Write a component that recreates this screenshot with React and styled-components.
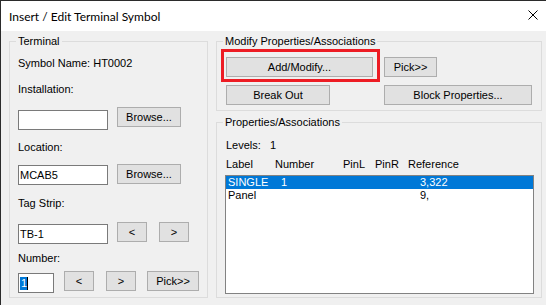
import React from 'react';
import styled, { createGlobalStyle } from 'styled-components';

const GlobalStyle = createGlobalStyle`
  html, body {
    margin: 0;
    padding: 0;
    background: #f0f0f0;
  }
  * {
    box-sizing: border-box;
  }
`;

const Window = styled.div`
  width: 546px;
  height: 305px;
  display: flex;
  flex-direction: column;
  border-left: 1px solid #2b2b2b;
  background: #f0f0f0;
  overflow: hidden;
  font-family: "Liberation Sans", Arial, sans-serif;
  font-size: 11px;
  color: #000;
`;

const TitleBar = styled.div`
  height: 31px;
  flex: none;
  display: flex;
  align-items: center;
  justify-content: space-between;
  padding: 0 8px 0 8px;
  background: #fff;
  border-top: 1px solid #2b2b2b;
`;

const Title = styled.div`
  font-family: Lato, "Noto Sans", sans-serif;
  font-size: 12px;
  color: #000;
`;

const CloseIcon = styled.svg`
  width: 10px;
  height: 10px;
  margin-top: -2px;
`;

const Body = styled.div`
  flex: 1;
  display: flex;
  gap: 8px;
  padding: 3px 0 0 8px;
`;

const Group = styled.fieldset`
  margin: 0;
  padding: 0;
  min-width: 0;
  width: ${(p) => p.$width}px;
  height: ${(p) => p.$height}px;
  border: 1px solid #dcdcdc;
  display: flex;
  flex-direction: column;
`;

const Legend = styled.legend`
  margin-left: 6px;
  padding: 0 2px;
  line-height: 14px;
  font-size: 11px;
`;

const Stack = styled.div`
  display: flex;
  flex-direction: column;
  padding-left: 8px;
`;

const Label = styled.div`
  line-height: 14px;
  margin-top: ${(p) => p.$mt || 0}px;
  white-space: nowrap;
`;

const Row = styled.div`
  display: flex;
  align-items: flex-start;
  gap: ${(p) => p.$gap || 9}px;
  margin-top: ${(p) => p.$mt || 0}px;
`;

const TextBox = styled.div`
  width: ${(p) => p.$width || 90}px;
  height: 20px;
  margin-top: ${(p) => p.$mt || 0}px;
  background: #fff;
  border: 1px solid #7a7a7a;
  padding-left: 1px;
  display: flex;
  align-items: center;
  white-space: nowrap;
`;

const Selected = styled.span`
  background: #0078d7;
  color: #fff;
  line-height: 13px;
  padding: 0 0 0 1px;
  border-right: 1px solid #000;
`;

const Button = styled.div`
  width: ${(p) => p.$width}px;
  height: 20px;
  flex: none;
  margin-left: ${(p) => p.$ml || 0}px;
  background: #e1e1e1;
  border: 1px solid #adadad;
  display: flex;
  align-items: center;
  justify-content: center;
  white-space: nowrap;
`;

const RightColumn = styled.div`
  display: flex;
  flex-direction: column;
  gap: 4px;
`;

const ButtonGrid = styled.div`
  display: grid;
  grid-template-columns: 158px auto;
  row-gap: 8px;
  justify-items: start;
  padding: 9px 0 0 9px;
`;

const Highlight = styled.div`
  position: relative;
`;

const RedBox = styled.div`
  position: absolute;
  left: -5px;
  top: -8px;
  width: 159px;
  height: 33px;
  border: 3px solid #ed1c24;
  pointer-events: none;
`;

const InfoRow = styled.div`
  display: grid;
  grid-template-columns: ${(p) => p.$cols};
  line-height: 14px;
  margin-top: ${(p) => p.$mt || 0}px;
  padding-left: 1px;
  white-space: nowrap;
`;

const ListBox = styled.div`
  width: 309px;
  height: 119px;
  margin-top: 4px;
  background: #fff;
  border: 1px solid #828282;
  display: flex;
  flex-direction: column;
`;

const ListRow = styled.div`
  display: grid;
  grid-template-columns: 53px 139px auto;
  height: 13px;
  line-height: 13px;
  padding-left: 2px;
  white-space: nowrap;
  background: ${(p) => (p.$selected ? '#0078d7' : 'transparent')};
  color: ${(p) => (p.$selected ? '#fff' : '#000')};
`;

const rows = [
  { label: 'SINGLE', number: '1', reference: '3,322', selected: true },
  { label: 'Panel', number: '', reference: '9,', selected: false },
];

const App = () => (
  <>
    <GlobalStyle />
    <Window>
      <TitleBar>
        <Title>Insert / Edit Terminal Symbol</Title>
        <CloseIcon viewBox="0 0 10 10">
          <path d="M0.5 0.5 L9.5 9.5 M9.5 0.5 L0.5 9.5" stroke="#000" strokeWidth="1" fill="none" />
        </CloseIcon>
      </TitleBar>
      <Body>
        <Group $width={199} $height={264}>
          <Legend>Terminal</Legend>
          <Stack>
            <Label $mt={8}>Symbol Name: HT0002</Label>
            <Label $mt={12}>Installation:</Label>
            <Row $mt={11}>
              <TextBox $mt={3} />
              <Button $width={64}>Browse...</Button>
            </Row>
            <Label $mt={10}>Location:</Label>
            <Row $mt={10}>
              <TextBox $mt={1}>MCAB5</TextBox>
              <Button $width={64}>Browse...</Button>
            </Row>
            <Label $mt={11}>Tag Strip:</Label>
            <Row $mt={12} $gap={9}>
              <TextBox $mt={2}>TB-1</TextBox>
              <Button $width={30}>&lt;</Button>
              <Button $width={30} $ml={3}>&gt;</Button>
            </Row>
            <Label $mt={7}>Number:</Label>
            <Row $mt={6} $gap={10}>
              <TextBox $mt={2} $width={36}>
                <Selected>1</Selected>
              </TextBox>
              <Button $width={30}>&lt;</Button>
              <Button $width={30} $ml={2}>&gt;</Button>
              <Button $width={52} $ml={1}>Pick&gt;&gt;</Button>
            </Row>
          </Stack>
        </Group>
        <RightColumn>
          <Group $width={326} $height={77}>
            <Legend>Modify Properties/Associations</Legend>
            <ButtonGrid>
              <Highlight>
                <Button $width={147}>Add/Modify...</Button>
                <RedBox />
              </Highlight>
              <Button $width={53}>Pick&gt;&gt;</Button>
              <Button $width={104}>Break Out</Button>
              <Button $width={148}>Block Properties...</Button>
            </ButtonGrid>
          </Group>
          <Group $width={326} $height={183}>
            <Legend>Properties/Associations</Legend>
            <Stack>
              <InfoRow $cols="44px auto" $mt={9}>
                <span>Levels:</span>
                <span>1</span>
              </InfoRow>
              <InfoRow $cols="49px 68px 32px 33px auto" $mt={5}>
                <span>Label</span>
                <span>Number</span>
                <span>PinL</span>
                <span>PinR</span>
                <span>Reference</span>
              </InfoRow>
              <ListBox>
                {rows.map((row) => (
                  <ListRow key={row.label} $selected={row.selected}>
                    <span>{row.label}</span>
                    <span>{row.number}</span>
                    <span>{row.reference}</span>
                  </ListRow>
                ))}
              </ListBox>
            </Stack>
          </Group>
        </RightColumn>
      </Body>
    </Window>
  </>
);

export default App;
